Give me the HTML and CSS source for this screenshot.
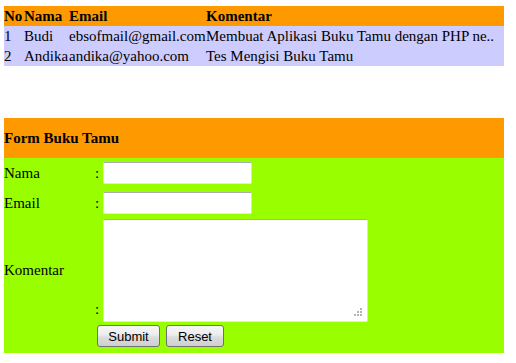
FILE: index.html
```html
<!DOCTYPE html>
<html lang="id">
<head>
    <meta charset="UTF-8">
    <title>Buku Tamu</title>
    <link rel="stylesheet" href="styles.css">
</head>
<body>
    <table class="guest-list">
        <colgroup>
            <col class="col-no">
            <col class="col-nama">
            <col class="col-email">
            <col>
        </colgroup>
        <tr class="list-head">
            <th>No</th>
            <th>Nama</th>
            <th>Email</th>
            <th>Komentar</th>
        </tr>
        <tr class="list-row">
            <td>1</td>
            <td>Budi</td>
            <td>ebsofmail@gmail.com</td>
            <td>Membuat Aplikasi Buku Tamu dengan PHP ne..</td>
        </tr>
        <tr class="list-row">
            <td>2</td>
            <td>Andika</td>
            <td>andika@yahoo.com</td>
            <td>Tes Mengisi Buku Tamu</td>
        </tr>
    </table>

    <form class="guest-form" onsubmit="return false;">
        <table class="form-table">
            <tr class="form-head">
                <th colspan="2">Form Buku Tamu</th>
            </tr>
            <tr>
                <td class="form-label">Nama</td>
                <td>
                    <div class="field">
                        <span class="colon">:</span>
                        <input type="text" name="nama" class="text-input">
                    </div>
                </td>
            </tr>
            <tr>
                <td class="form-label">Email</td>
                <td>
                    <div class="field">
                        <span class="colon">:</span>
                        <input type="text" name="email" class="text-input">
                    </div>
                </td>
            </tr>
            <tr>
                <td class="form-label">Komentar</td>
                <td>
                    <div class="field field-area">
                        <span class="colon">:</span>
                        <span class="area-wrap">
                            <textarea name="komentar" class="text-area"></textarea>
                            <svg class="grip" width="8" height="8" viewBox="0 0 8 8">
                                <rect x="6" y="0" width="2" height="2"/>
                                <rect x="3" y="3" width="2" height="2"/>
                                <rect x="6" y="3" width="2" height="2"/>
                                <rect x="0" y="6" width="2" height="2"/>
                                <rect x="3" y="6" width="2" height="2"/>
                                <rect x="6" y="6" width="2" height="2"/>
                            </svg>
                        </span>
                    </div>
                </td>
            </tr>
            <tr>
                <td></td>
                <td>
                    <div class="actions">
                        <button type="submit" class="btn">Submit</button>
                        <button type="reset" class="btn btn-reset">Reset</button>
                    </div>
                </td>
            </tr>
        </table>
    </form>
</body>
</html>
```

FILE: styles.css
```css
body {
    margin: 6px 4px;
    font-family: 'Liberation Serif', 'Times New Roman', serif;
    font-size: 15px;
    color: #000;
    background: #fff;
}

table {
    border-collapse: collapse;
}

th, td {
    padding: 0;
    text-align: left;
}

/* daftar tamu */
.guest-list {
    width: 500px;
    table-layout: fixed;
}

.col-no { width: 20px; }
.col-nama { width: 45px; }
.col-email { width: 137px; }

.guest-list th,
.guest-list td {
    height: 20px;
    line-height: 20px;
    white-space: nowrap;
}

.list-head {
    background: #ff9900;
}

.list-row {
    background: #ccccff;
}

/* form */
.guest-form {
    margin-top: 52px;
}

.form-table {
    width: 500px;
    background: #99ff00;
}

.form-head th {
    height: 40px;
    background: #ff9900;
    vertical-align: middle;
}

.form-label {
    width: 91px;
    vertical-align: middle;
}

.field {
    display: flex;
    align-items: center;
}

.field-area {
    align-items: flex-end;
}

.colon {
    width: 8px;
    flex-shrink: 0;
}

.field-area .colon {
    line-height: 15px;
    margin-bottom: 6px;
}

.text-input {
    width: 149px;
    height: 22px;
    margin: 4px 0;
    padding: 1px 3px;
    box-sizing: border-box;
    border: 1px solid #abadb3;
    border-color: #abadb3 #dbdfe6 #e3e9ef #e2e3ea;
    border-radius: 2px;
    background: #fff;
    font-family: 'Liberation Sans', Arial, sans-serif;
    font-size: 13px;
}

.area-wrap {
    position: relative;
    display: block;
}

.text-area {
    display: block;
    width: 265px;
    height: 103px;
    margin: 1px 0;
    padding: 2px;
    box-sizing: border-box;
    border: 1px solid #abadb3;
    border-color: #abadb3 #dbdfe6 #e3e9ef #e2e3ea;
    border-radius: 2px;
    background: #fff;
    font-family: 'Liberation Mono', monospace;
    font-size: 13px;
    resize: none;
}

.grip {
    position: absolute;
    right: 6px;
    bottom: 7px;
    fill: #b4b4b4;
}

.actions {
    display: flex;
    gap: 6px;
    margin: 2px 0 6px 2px;
}

.btn {
    width: 63px;
    height: 22px;
    padding: 0;
    border: 1px solid #707070;
    border-radius: 3px;
    background: linear-gradient(#f7f7f7 0%, #ececec 45%, #dddddd 55%, #cfcfcf 100%);
    color: #000;
    font-family: 'Liberation Sans', Arial, sans-serif;
    font-size: 13px;
}

.btn-reset {
    width: 58px;
}
```
